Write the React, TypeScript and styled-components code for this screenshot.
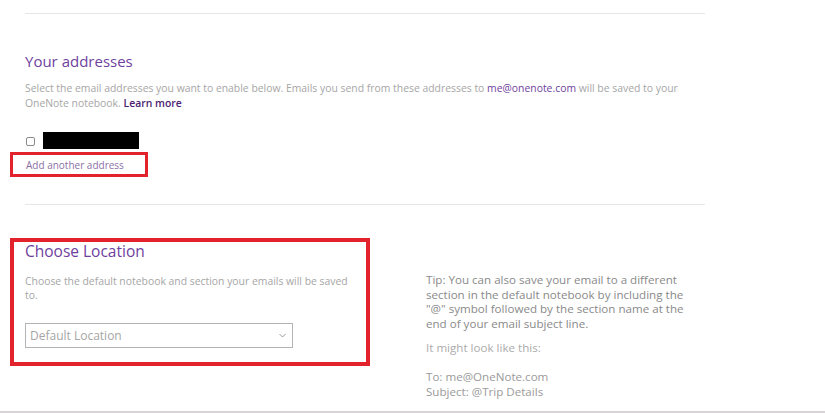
import React from "react";
import styled, { createGlobalStyle } from "styled-components";

const Global = createGlobalStyle`
  html, body { margin: 0; padding: 0; background: #ffffff; }
  body { font-family: "Open Sans", "Noto Sans", sans-serif; }
  p, h2 { margin: 0; }
`;

const Page = styled.div`
  width: 825px;
  height: 413px;
  box-sizing: border-box;
  border-bottom: 2px solid #d9d2d6;
  overflow: hidden;
`;

const Content = styled.div`
  width: 680px;
  padding: 13px 0 0 25px;
`;

const Divider = styled.div<{ $top?: number }>`
  height: 1px;
  background: #e6e6e6;
  margin-top: ${(p) => p.$top ?? 0}px;
`;

const Heading = styled.h2<{ $top: number; $size: number; $lh: number }>`
  margin-top: ${(p) => p.$top}px;
  font-size: ${(p) => p.$size}px;
  line-height: ${(p) => p.$lh}px;
  font-weight: 400;
  color: #6e3f9e;
`;

const Para = styled.p<{ $top: number; $w: number; $lh: number }>`
  margin-top: ${(p) => p.$top}px;
  font-size: 10.4px;
  line-height: ${(p) => p.$lh}px;
  color: #a6a6a6;
  max-width: ${(p) => p.$w}px;
`;

const Em = styled.span`
  color: #6f3f9c;
`;

const Strong = styled.span`
  color: #4b2271;
  font-weight: 600;
`;

const AddressRow = styled.div`
  display: flex;
  align-items: center;
  gap: 8px;
  margin-top: 21px;
  height: 17px;
`;

const Check = styled.span`
  width: 7px;
  height: 7px;
  border: 1px solid #8a8a8a;
  border-radius: 2px;
  margin: 1px 0 0 1px;
`;

const Redacted = styled.span`
  width: 96px;
  height: 17px;
  background: #000;
`;

const Highlight = styled.div<{ $b: number; $top: number }>`
  width: fit-content;
  border: ${(p) => p.$b}px solid #e2232b;
  margin-left: -15px;
  margin-top: ${(p) => p.$top}px;
  flex: none;
`;

const AddLink = styled.div`
  width: 119px;
  height: 19px;
  padding-left: 13px;
  display: flex;
  align-items: center;
  font-size: 10px;
  color: #8b6fa6;
`;

const Row = styled.div`
  display: flex;
  align-items: flex-start;
`;

const LocationBox = styled.div`
  width: 341px;
  height: 120px;
  padding-left: 11px;
`;

const Select = styled.div`
  margin-top: 21px;
  width: 268px;
  height: 25px;
  box-sizing: border-box;
  border: 1px solid #b4b4b4;
  display: flex;
  align-items: center;
  justify-content: space-between;
  padding: 0 6px 0 4px;
  font-size: 12px;
  color: #a6a6a6;
`;

const Tip = styled.div`
  margin: 68px 0 0 56px;
  width: 272px;
  font-size: 11.6px;
  line-height: 14.5px;
`;

const TipP = styled.p<{ $c: string; $top: number }>`
  margin-top: ${(p) => p.$top}px;
  color: ${(p) => p.$c};
`;

export default function App() {
  return (
    <Page>
      <Global />
      <Content>
        <Divider />
        <Heading $top={37} $size={15} $lh={20}>Your addresses</Heading>
        <Para $top={10} $w={680} $lh={15}>
          Select the email addresses you want to enable below. Emails you send from these addresses to{" "}
          <Em>me@onenote.com</Em> will be saved to your OneNote notebook. <Strong>Learn more</Strong>
        </Para>
        <AddressRow>
          <Check />
          <Redacted />
        </AddressRow>
        <Highlight $b={3} $top={3}>
          <AddLink>Add another address</AddLink>
        </Highlight>
        <Divider $top={27} />
        <Row>
          <Highlight $b={4} $top={33}>
            <LocationBox>
              <Heading $top={0} $size={15.5} $lh={18}>Choose Location</Heading>
              <Para $top={14} $w={335} $lh={14}>
                Choose the default notebook and section your emails will be saved to.
              </Para>
              <Select>
                <span>Default Location</span>
                <svg width="7" height="5" viewBox="0 0 7 5">
                  <path d="M0.5 1 L3.5 4 L6.5 1" fill="none" stroke="#9a9a9a" strokeWidth="1" />
                </svg>
              </Select>
            </LocationBox>
          </Highlight>
          <Tip>
            <TipP $c="#8a8a8a" $top={0}>
              Tip: You can also save your email to a different section in the default notebook by including the "@" symbol followed by the section name at the end of your email subject line.
            </TipP>
            <TipP $c="#ababab" $top={10}>It might look like this:</TipP>
            <TipP $c="#9a9a9a" $top={14.5}>
              To: me@OneNote.com
              <br />
              Subject: @Trip Details
            </TipP>
          </Tip>
        </Row>
      </Content>
    </Page>
  );
}
